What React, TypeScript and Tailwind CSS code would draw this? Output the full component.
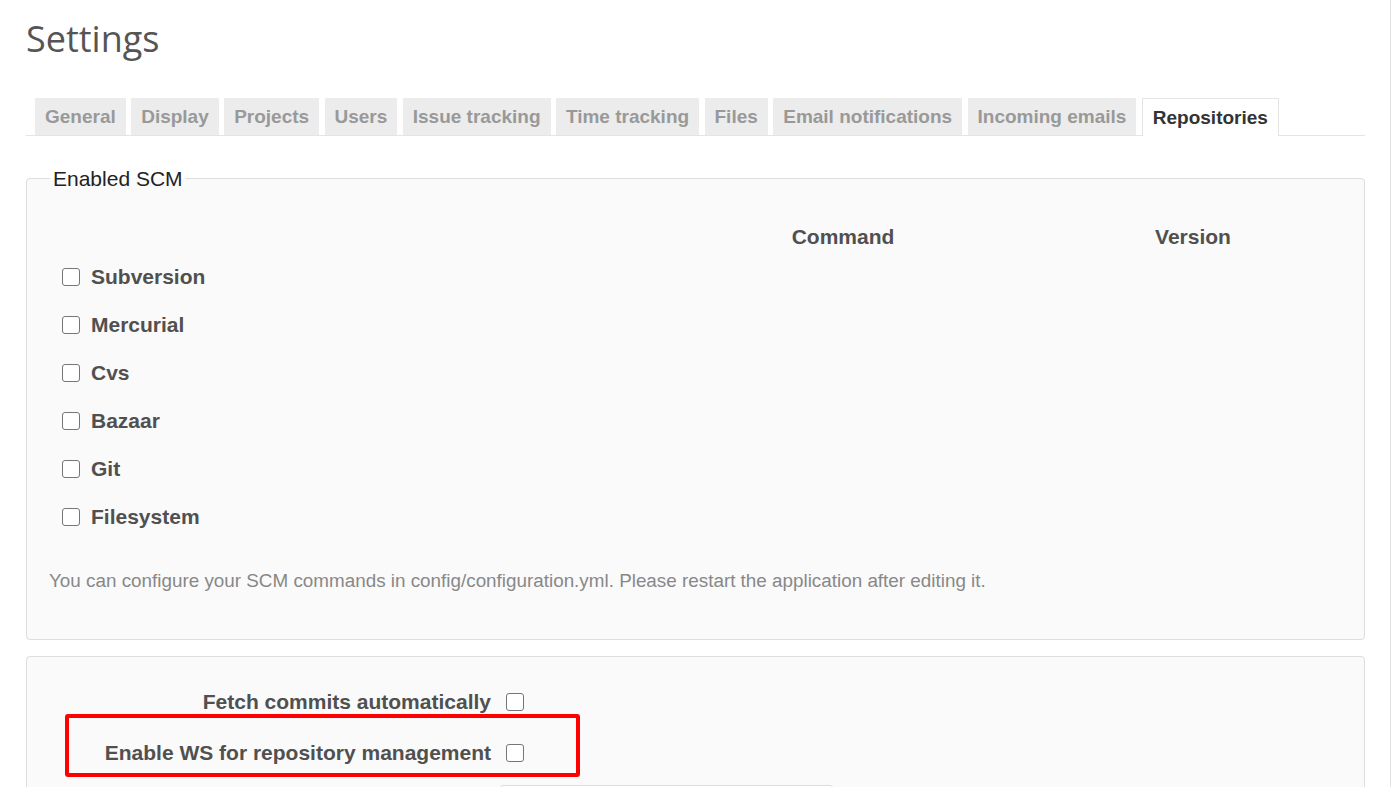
import React from "react";

const tabs = [
  "General",
  "Display",
  "Projects",
  "Users",
  "Issue tracking",
  "Time tracking",
  "Files",
  "Email notifications",
  "Incoming emails",
];

const scms = ["Subversion", "Mercurial", "Cvs", "Bazaar", "Git", "Filesystem"];

function Box() {
  return (
    <span className="inline-block w-[18px] h-[18px] shrink-0 rounded-[3px] border-[1.5px] border-[#767676] bg-white" />
  );
}

export default function App() {
  return (
    <div
      className="h-screen overflow-hidden bg-white border-r border-[#e2e2e2] pl-[26px] pr-[25px]"
      style={{ fontFamily: '"Liberation Sans", Arial, sans-serif' }}
    >
      <h2
        className="pt-[21px] text-[36px] leading-[36px] text-[#555] font-normal"
        style={{ fontFamily: '"Open Sans", sans-serif' }}
      >
        Settings
      </h2>

      <div className="mt-[41px] flex gap-[5.4px] pl-[9px] border-b border-[#e4e4e4] h-[38px]">
        {tabs.map((t) => (
          <div
            key={t}
            className="h-[37px] px-[10px] pt-[2px] flex items-center bg-[#ececec] text-[#999] font-bold text-[19px] whitespace-nowrap"
          >
            {t}
          </div>
        ))}
        <div className="h-[38px] px-[10px] pt-[2px] flex items-center bg-white border border-b-0 border-[#e4e4e4] text-[#333] font-bold text-[19px] whitespace-nowrap">
          Repositories
        </div>
      </div>

      <fieldset className="mt-[29px] border border-[#dddddd] rounded-[4px] bg-[#fafafa] pl-[23px] pr-[23px] pb-[46px]">
        <legend className="px-[3px] text-[21px] leading-[24px] text-[#222] pt-[2px]">Enabled SCM</legend>
        <div className="mt-[30px]">
          <div className="flex h-[32px] items-center font-bold text-[21px] text-[#505050]">
            <div className="w-[530px]" />
            <div className="w-[526px] text-center">Command</div>
            <div className="w-[174px] text-center">Version</div>
          </div>
          {scms.map((s) => (
            <div key={s} className="flex h-[48px] items-center pl-[12px] gap-[11px] font-bold text-[21px] text-[#505050]">
              <Box />
              <span>{s}</span>
            </div>
          ))}
        </div>
        <p className="mt-[28px] -ml-px text-[18.85px] leading-[24px] text-[#888]">
          You can configure your SCM commands in config/configuration.yml. Please restart the application after editing it.
        </p>
      </fieldset>

      <fieldset className="mt-[16px] border border-[#dddddd] rounded-[4px] bg-[#fafafa] pt-[25px] pb-[20px]">
        <div className="flex flex-col gap-[11px] font-bold text-[21px] text-[#505050]">
          <div className="flex h-[40px] items-center">
            <div className="w-[464px] text-right">Fetch commits automatically</div>
            <span className="ml-[15px] flex"><Box /></span>
          </div>
          <div className="relative flex h-[40px] items-center">
            <div className="w-[464px] text-right">Enable WS for repository management</div>
            <span className="ml-[15px] flex"><Box /></span>
            <div className="absolute left-[38px] top-[-19px] w-[515px] h-[63px] border-4 border-[#ff0000] rounded-[3px]" />
          </div>
          <div className="flex h-[40px] items-start">
            <div className="w-[464px]" />
            <div className="ml-[9px] mt-[1px] w-[333px] h-[30px] bg-white border border-[#dcdcdc] rounded-[3px]" />
          </div>
        </div>
      </fieldset>
    </div>
  );
}
